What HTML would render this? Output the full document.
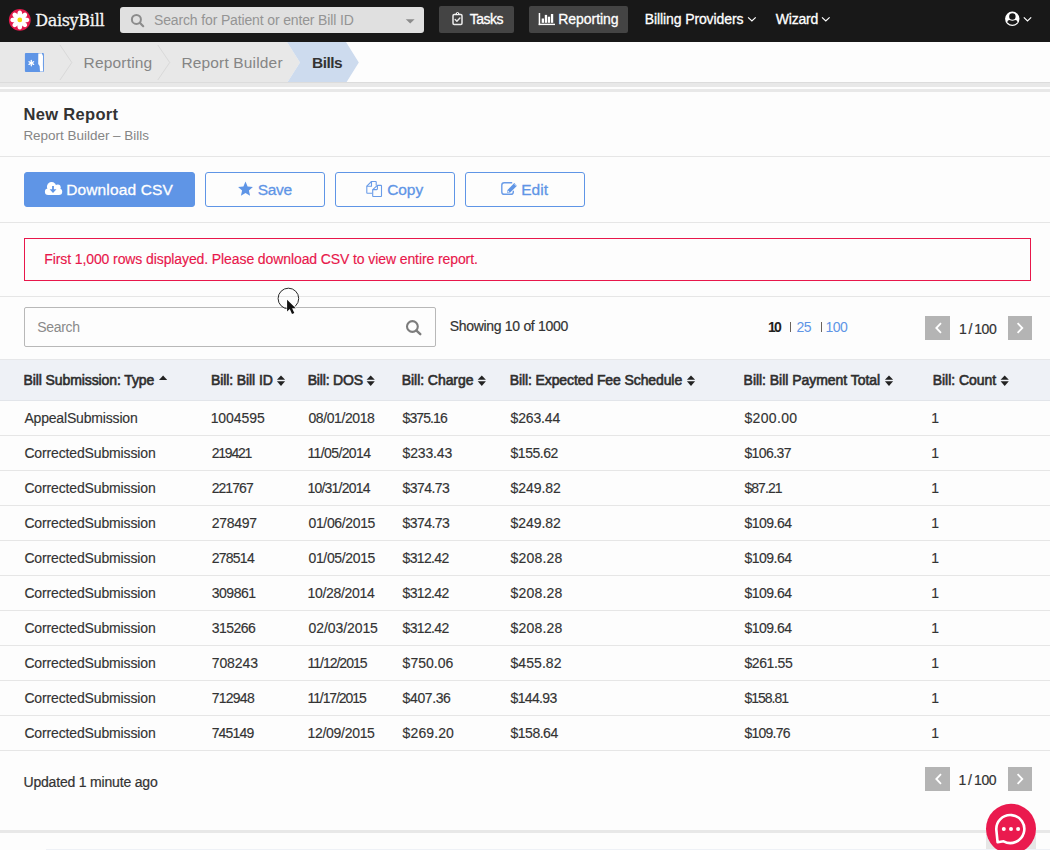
<!DOCTYPE html>
<html lang="en">
<head>
<meta charset="utf-8">
<title>DaisyBill - Report Builder - Bills</title>
<style>
html,body{margin:0;padding:0;}
body{width:1050px;height:850px;overflow:hidden;position:relative;background:#fdfdfd;font-family:"Liberation Sans",sans-serif;}
.a{position:absolute;}
.t{position:absolute;white-space:nowrap;line-height:1;}
svg{position:absolute;overflow:visible;}
.hl{position:absolute;left:0;width:1050px;height:1px;background:#e6e6e6;}
.btn{position:absolute;top:172px;height:33px;border:1px solid #5f95e6;border-radius:3px;}
.pg{position:absolute;width:25px;height:24px;background:#b4b4b4;}
</style>
</head>
<body>
<!-- top nav -->
<div class="a" id="nav" style="left:0;top:0;width:1050px;height:42px;background:#181818;"></div>
<div class="a" id="navsearch" style="left:120px;top:7px;width:304px;height:26px;background:#e0e0e0;border-radius:3px;"></div>
<div class="a" id="btasks" style="left:439px;top:6px;width:75px;height:27px;background:#444;border-radius:2px;"></div>
<div class="a" id="breport" style="left:529px;top:6px;width:99px;height:27px;background:#444;border-radius:2px;"></div>
<!-- breadcrumb -->
<div class="a" id="bc" style="left:0;top:42px;width:1050px;height:41px;background:#fdfdfd;"></div>
<svg id="bcsvg" style="left:0;top:42px;" width="1050" height="41" viewBox="0 0 1050 41">
  <path d="M0 0H287L300 20.5L287 41H0Z" fill="#e8e8e8"/>
  <path d="M287 0H346L358.8 20.5L346 41H287L300 20.5Z" fill="#cddbee"/>
  <path d="M60 3L71.8 20.5L60 38" fill="none" stroke="#d9d9d9" stroke-width="1"/>
  <path d="M157.8 3L169.7 20.5L157.8 38" fill="none" stroke="#d9d9d9" stroke-width="1"/>
</svg>
<div class="a" style="left:0;top:82px;width:1050px;height:1px;background:#dcdcdc;"></div>
<div class="a" style="left:0;top:83px;width:1050px;height:4px;background:#e8e8e8;"></div>
<div class="a" style="left:0;top:87px;width:1050px;height:2px;background:#fdfdfd;"></div>
<div class="a" style="left:0;top:89px;width:1050px;height:3px;background:#e8e8e8;"></div>
<!-- dividers -->
<div class="hl" style="top:156px;"></div>
<div class="hl" style="top:222px;"></div>
<div class="hl" style="top:296px;"></div>
<!-- buttons -->
<div class="btn" style="left:24px;width:169px;background:#5f95e6;"></div>
<div class="btn" style="left:205px;width:118px;"></div>
<div class="btn" style="left:335px;width:118px;"></div>
<div class="btn" style="left:465px;width:118px;"></div>
<!-- alert -->
<div class="a" style="left:24px;top:238px;width:1005px;height:41px;border:1px solid #e8174b;"></div>
<!-- search input -->
<div class="a" style="left:24px;top:307px;width:410px;height:38px;border:1px solid #b8b8b8;border-radius:2px;"></div>
<!-- pager top -->
<div class="pg" style="left:925px;top:316px;"></div>
<div class="pg" style="left:1008px;top:316px;width:24px;"></div>
<!-- table header -->
<div class="a" style="left:0;top:359px;width:1050px;height:42px;background:#eef1f6;box-sizing:border-box;border-top:1px solid #e6e7e9;border-bottom:1px solid #e2e5ea;"></div>
<!-- row lines -->
<div class="hl" style="top:435px;"></div>
<div class="hl" style="top:470px;"></div>
<div class="hl" style="top:505px;"></div>
<div class="hl" style="top:540px;"></div>
<div class="hl" style="top:575px;"></div>
<div class="hl" style="top:610px;"></div>
<div class="hl" style="top:645px;"></div>
<div class="hl" style="top:680px;"></div>
<div class="hl" style="top:715px;"></div>
<div class="hl" style="top:750px;"></div>
<!-- pager bottom -->
<div class="pg" style="left:925px;top:767px;"></div>
<div class="pg" style="left:1008px;top:767px;width:24px;"></div>
<!-- bottom band -->
<div class="a" style="left:0;top:830px;width:1050px;height:3px;background:#e8e8e8;"></div>
<div class="a" style="left:46px;top:849px;width:1004px;height:1px;background:#eef1f6;"></div>
<!-- logo daisy -->
<svg style="left:0;top:0" width="42" height="42" viewBox="0 0 42 42">
  <circle cx="19.8" cy="19.9" r="10.9" fill="#e2194b"/>
  <g fill="#fff" transform="translate(19.8 19.9)">
    <ellipse cx="0" cy="-5.6" rx="2.45" ry="3.9"/>
    <ellipse cx="0" cy="-5.6" rx="2.45" ry="3.9" transform="rotate(45)"/>
    <ellipse cx="0" cy="-5.6" rx="2.45" ry="3.9" transform="rotate(90)"/>
    <ellipse cx="0" cy="-5.6" rx="2.45" ry="3.9" transform="rotate(135)"/>
    <ellipse cx="0" cy="-5.6" rx="2.45" ry="3.9" transform="rotate(180)"/>
    <ellipse cx="0" cy="-5.6" rx="2.45" ry="3.9" transform="rotate(225)"/>
    <ellipse cx="0" cy="-5.6" rx="2.45" ry="3.9" transform="rotate(270)"/>
    <ellipse cx="0" cy="-5.6" rx="2.45" ry="3.9" transform="rotate(315)"/>
    <circle r="4.4" fill="#fff"/>
    <circle r="2.4" fill="#f7d308"/>
  </g>
</svg>
<!-- nav icons -->
<svg style="left:0;top:0" width="1050" height="42" viewBox="0 0 1050 42">
  <!-- search magnifier -->
  <circle cx="136.4" cy="19.4" r="4.5" fill="none" stroke="#8c8c8c" stroke-width="2"/>
  <path d="M139.8 22.8L143.2 26.2" stroke="#8c8c8c" stroke-width="2.2" stroke-linecap="round"/>
  <!-- caret -->
  <path d="M405.8 19.2H414.6L410.2 23.4Z" fill="#8c8c8c"/>
  <!-- tasks clipboard -->
  <g fill="none" stroke="#ececec" stroke-width="1.5" stroke-linejoin="round">
    <rect x="453" y="14.6" width="9" height="9.8" rx="1.2"/>
    <path d="M455.2 19.6L456.9 21.2L459.9 18" stroke-linecap="round" stroke-width="1.4"/>
  </g>
  <path d="M455 14.4L456.4 12.6Q457.5 11.6 458.6 12.6L460 14.4Z" fill="#fff"/>
  <circle cx="457.5" cy="13.4" r="0.6" fill="#444"/>
  <!-- bar chart -->
  <g fill="#fff">
    <rect x="538.7" y="13" width="1.5" height="12.1"/>
    <rect x="538.7" y="23.7" width="16.3" height="1.4"/>
    <rect x="541.7" y="18.5" width="2.3" height="4.3"/>
    <rect x="544.8" y="14.9" width="2.3" height="7.9"/>
    <rect x="547.8" y="16.7" width="2.3" height="6.1"/>
    <rect x="550.9" y="14" width="2.3" height="8.8"/>
  </g>
  <!-- chevrons -->
  <g fill="none" stroke="#fff" stroke-width="1.2">
    <path d="M748.1 17.4L751.9 21L755.7 17.4"/>
    <path d="M822 17.4L825.8 21L829.6 17.4"/>
    <path d="M1023.8 17.4L1027.5 21L1031.2 17.4"/>
  </g>
  <!-- user circle -->
  <circle cx="1012.3" cy="18.8" r="7.2" fill="#fff"/>
  <circle cx="1012.4" cy="16.5" r="3.2" fill="#181818"/>
  <path d="M1007.2 22.3Q1007.6 20.2 1009.6 20.1Q1012.4 21.4 1015.2 20.1Q1017.2 20.2 1017.6 22.3Q1012.4 27.4 1007.2 22.3Z" fill="#181818"/>
</svg>
<!-- breadcrumb home icon -->
<svg style="left:20px;top:48px" width="30" height="28" viewBox="20 48 30 28">
  <rect x="24.9" y="52.9" width="19" height="19.1" rx="1" fill="#5f95e6"/>
  <g stroke="#fff" stroke-width="1.3" stroke-linecap="round">
    <path d="M31.3 60.4V65.8"/><path d="M29 61.8L33.6 64.4"/><path d="M29 64.4L33.6 61.8"/>
  </g>
  <path d="M38.3 53.4L41.8 53.2L43 56L42.9 65L43.1 71.4L40 71.6L39.6 66L38.2 64Z" fill="#fff"/>
</svg>
<!-- button icons -->
<svg style="left:0;top:172px" width="600" height="35" viewBox="0 172 600 35">
  <!-- cloud download -->
  <g fill="#fff">
    <circle cx="51.6" cy="186.8" r="4.7"/>
    <circle cx="57.8" cy="187.3" r="2.9"/>
    <rect x="44.9" y="188.4" width="17.3" height="6.6" rx="3.3"/>
    <rect x="48" y="187" width="11" height="6"/>
  </g>
  <path d="M52.1 186.1H53.9V189.3H56.5L53 193.1L49.6 189.3H52.1Z" fill="#5f95e6"/>
  <!-- star -->
  <path d="M245.5 181.6L247.6 186.5L252.9 187L248.9 190.5L250.1 195.8L245.5 193L240.9 195.8L242.1 190.5L238.1 187L243.4 186.5Z" fill="#5f95e6"/>
  <!-- copy -->
  <g fill="none" stroke="#6a9ce8" stroke-width="1.1" stroke-linejoin="round">
    <path d="M372.2 193.2H367.3Q366.8 193.2 366.8 192.7V186.2L371.5 181.5H375.7Q376.2 181.5 376.2 182V185.5"/>
    <path d="M366.8 186.2H371.5V181.5"/>
    <path d="M372.7 189.6L377.4 185.4H381Q381.5 185.4 381.5 185.9V196Q381.5 196.5 381 196.5H373.2Q372.7 196.5 372.7 196Z"/>
    <path d="M372.7 189.6H376.6Q377.4 189.6 377.4 188.8V185.4"/>
  </g>
  <!-- edit -->
  <path d="M512.2 182.8H504.2Q501.8 182.8 501.8 185.2V191.9Q501.8 194.3 504.2 194.3H510.9Q513.3 194.3 513.3 191.9V190.8" fill="none" stroke="#6a9ce8" stroke-width="1.4"/>
  <path d="M507.1 192.9L507.5 189.9L514.3 183.1L517 185.8L510.2 192.6Z" fill="#5f95e6"/>
  <path d="M514.6 184.1L516.6 186.1" stroke="#fdfdfd" stroke-width="0.8"/>
  <path d="M508 190.6L509.4 192L507.6 192.4Z" fill="#fdfdfd"/>
</svg>
<!-- input search icon -->
<svg style="left:398px;top:312px" width="30" height="30" viewBox="398 312 30 30">
  <circle cx="412.4" cy="326.5" r="5.4" fill="none" stroke="#7c7c7c" stroke-width="2.1"/>
  <path d="M416.5 330.6L420.3 334.2" stroke="#7c7c7c" stroke-width="2.4" stroke-linecap="round"/>
</svg>
<!-- per-page separators -->
<div class="a" style="left:789.5px;top:322.3px;width:1.5px;height:9.8px;background:#6a625c;"></div>
<div class="a" style="left:820.5px;top:322.3px;width:1.5px;height:9.8px;background:#6a625c;"></div>
<!-- sort icons + pager chevrons -->
<svg style="left:0;top:300px" width="1050" height="100" viewBox="0 300 1050 100">
  <path d="M159 379.9L163.1 375.5L167.2 379.9Z" fill="#222"/>
  <g fill="#222">
    <path d="M276.9 379.8L281 375.4L285.1 379.8Z"/><path d="M276.9 381.2L281 385.9L285.1 381.2Z"/>
  </g>
  <g fill="#222" transform="translate(89.7 0)"><path d="M276.9 379.8L281 375.4L285.1 379.8Z"/><path d="M276.9 381.2L281 385.9L285.1 381.2Z"/></g>
  <g fill="#222" transform="translate(200.8 0)"><path d="M276.9 379.8L281 375.4L285.1 379.8Z"/><path d="M276.9 381.2L281 385.9L285.1 381.2Z"/></g>
  <g fill="#222" transform="translate(410 0)"><path d="M276.9 379.8L281 375.4L285.1 379.8Z"/><path d="M276.9 381.2L281 385.9L285.1 381.2Z"/></g>
  <g fill="#222" transform="translate(608 0)"><path d="M276.9 379.8L281 375.4L285.1 379.8Z"/><path d="M276.9 381.2L281 385.9L285.1 381.2Z"/></g>
  <g fill="#222" transform="translate(723.7 0)"><path d="M276.9 379.8L281 375.4L285.1 379.8Z"/><path d="M276.9 381.2L281 385.9L285.1 381.2Z"/></g>
  <g fill="none" stroke="#fff" stroke-width="1.8">
    <path d="M941 323.2L936.3 328L941 332.8"/>
    <path d="M1017.6 323.2L1022.3 328L1017.6 332.8"/>
  </g>
</svg>
<svg style="left:900px;top:760px" width="150" height="40" viewBox="900 760 150 40">
  <g fill="none" stroke="#fff" stroke-width="1.8">
    <path d="M941 774.2L936.3 779L941 783.8"/>
    <path d="M1017.6 774.2L1022.3 779L1017.6 783.8"/>
  </g>
</svg>
<!-- chat launcher -->
<div class="a" style="left:986px;top:834px;width:50px;height:15px;background:#e6e6e6;"></div>
<svg style="left:980px;top:795px" width="70" height="55" viewBox="980 795 70 55">
  <circle cx="1011" cy="828.8" r="25" fill="#ea1a4e"/>
  <path d="M997.6 842.3 L996.4 830.5 A14 14 0 1 1 1003.6 841.3 Z" fill="none" stroke="#fff" stroke-width="2.6" stroke-linejoin="round"/>
  <circle cx="1003.8" cy="828.9" r="2" fill="#fff"/>
  <circle cx="1011" cy="828.9" r="2" fill="#fff"/>
  <circle cx="1018.1" cy="828.9" r="2" fill="#fff"/>
</svg>
<!-- mouse pointer with click ring -->
<svg style="left:268px;top:280px" width="40" height="40" viewBox="268 280 40 40">
  <circle cx="288.4" cy="298.5" r="10.3" fill="none" stroke="#1e1e1e" stroke-width="0.95"/>
  <path d="M287.1 299.8V311.6L289.8 309.1L292 314.1L294.3 313.1L292.1 308.2H295.7Z" fill="#111" stroke="#fff" stroke-width="1.1" stroke-linejoin="round" paint-order="stroke"/>
</svg>

<span class="t" style="left:35.15px;top:13px;font-size:16px;color:#f4f4f4;font-family:'DejaVu Serif','Liberation Serif',serif;-webkit-text-stroke:0.3px;letter-spacing:-0.303px;">DaisyBill</span>
<span class="t" style="left:154.00px;top:13px;font-size:14px;color:#949494;letter-spacing:-0.142px;">Search for Patient or enter Bill ID</span>
<span class="t" style="left:469.75px;top:12px;font-size:14px;color:#fff;-webkit-text-stroke:0.3px;letter-spacing:-0.497px;">Tasks</span>
<span class="t" style="left:558.15px;top:12px;font-size:14px;color:#fff;-webkit-text-stroke:0.3px;letter-spacing:-0.027px;">Reporting</span>
<span class="t" style="left:644.75px;top:12px;font-size:14px;color:#fff;-webkit-text-stroke:0.3px;letter-spacing:-0.105px;">Billing Providers</span>
<span class="t" style="left:775.75px;top:12px;font-size:14px;color:#fff;-webkit-text-stroke:0.3px;letter-spacing:-0.214px;">Wizard</span>
<span class="t" style="left:83.50px;top:55px;font-size:15.5px;color:#858585;letter-spacing:0.189px;">Reporting</span>
<span class="t" style="left:181.40px;top:55px;font-size:15.5px;color:#858585;letter-spacing:0.160px;">Report Builder</span>
<span class="t" style="left:312.10px;top:55px;font-size:15.5px;color:#333;font-weight:700;letter-spacing:-0.553px;">Bills</span>
<span class="t" style="left:23.40px;top:106px;font-size:16.5px;color:#333;font-weight:700;letter-spacing:0.335px;">New Report</span>
<span class="t" style="left:23.40px;top:129px;font-size:13.5px;color:#858585;letter-spacing:-0.024px;">Report Builder – Bills</span>
<span class="t" style="left:66.15px;top:182px;font-size:15.5px;color:#fff;-webkit-text-stroke:0.3px;letter-spacing:0.139px;">Download CSV</span>
<span class="t" style="left:257.75px;top:182px;font-size:15.5px;color:#5f95e6;-webkit-text-stroke:0.3px;letter-spacing:-0.336px;">Save</span>
<span class="t" style="left:387.15px;top:182px;font-size:15.5px;color:#5f95e6;-webkit-text-stroke:0.3px;letter-spacing:-0.045px;">Copy</span>
<span class="t" style="left:521.15px;top:182px;font-size:15.5px;color:#5f95e6;-webkit-text-stroke:0.3px;letter-spacing:0.099px;">Edit</span>
<span class="t" style="left:44.28px;top:252px;font-size:14px;color:#e8174b;-webkit-text-stroke:0.15px;letter-spacing:-0.100px;">First 1,000 rows displayed. Please download CSV to view entire report.</span>
<span class="t" style="left:37.20px;top:320px;font-size:14px;color:#8a8a8a;letter-spacing:-0.294px;">Search</span>
<span class="t" style="left:449.70px;top:319px;font-size:14px;color:#333;-webkit-text-stroke:0.2px;letter-spacing:-0.305px;">Showing 10 of 1000</span>
<span class="t" style="left:768.00px;top:320px;font-size:14px;color:#222;font-weight:700;letter-spacing:-1.786px;">10</span>
<span class="t" style="left:796.60px;top:320px;font-size:14px;color:#5f95e6;letter-spacing:-0.686px;">25</span>
<span class="t" style="left:825.60px;top:320px;font-size:14px;color:#5f95e6;letter-spacing:-0.586px;">100</span>
<span class="t" style="left:958.90px;top:322px;font-size:14px;color:#333;word-spacing:-1.2px;-webkit-text-stroke:0.2px;letter-spacing:-0.438px;">1 / 100</span>
<span class="t" style="left:23.60px;top:373px;font-size:14px;color:#2e2e2e;-webkit-text-stroke:0.6px;letter-spacing:-0.108px;">Bill Submission: Type</span>
<span class="t" style="left:210.90px;top:373px;font-size:14px;color:#2e2e2e;-webkit-text-stroke:0.6px;letter-spacing:-0.091px;">Bill: Bill ID</span>
<span class="t" style="left:307.70px;top:373px;font-size:14px;color:#2e2e2e;-webkit-text-stroke:0.6px;letter-spacing:-0.181px;">Bill: DOS</span>
<span class="t" style="left:401.80px;top:373px;font-size:14px;color:#2e2e2e;-webkit-text-stroke:0.6px;letter-spacing:-0.062px;">Bill: Charge</span>
<span class="t" style="left:509.70px;top:373px;font-size:14px;color:#2e2e2e;-webkit-text-stroke:0.6px;letter-spacing:-0.101px;">Bill: Expected Fee Schedule</span>
<span class="t" style="left:743.60px;top:373px;font-size:14px;color:#2e2e2e;-webkit-text-stroke:0.6px;letter-spacing:-0.039px;">Bill: Bill Payment Total</span>
<span class="t" style="left:932.70px;top:373px;font-size:14px;color:#2e2e2e;-webkit-text-stroke:0.6px;letter-spacing:-0.032px;">Bill: Count</span>
<span class="t" style="left:24.38px;top:411px;font-size:14px;color:#333;-webkit-text-stroke:0.15px;letter-spacing:-0.175px;">AppealSubmission</span>
<span class="t" style="left:210.67px;top:411px;font-size:14px;color:#333;-webkit-text-stroke:0.15px;letter-spacing:-0.078px;">1004595</span>
<span class="t" style="left:308.47px;top:411px;font-size:14px;color:#333;-webkit-text-stroke:0.15px;letter-spacing:-0.404px;">08/01/2018</span>
<span class="t" style="left:402.57px;top:411px;font-size:14px;color:#333;-webkit-text-stroke:0.15px;letter-spacing:-0.912px;">$375.16</span>
<span class="t" style="left:510.47px;top:411px;font-size:14px;color:#333;-webkit-text-stroke:0.15px;letter-spacing:-0.128px;">$263.44</span>
<span class="t" style="left:744.38px;top:411px;font-size:14px;color:#333;-webkit-text-stroke:0.15px;letter-spacing:0.355px;">$200.00</span>
<span class="t" style="left:931.28px;top:411px;font-size:14px;color:#333;-webkit-text-stroke:0.15px;">1</span>
<span class="t" style="left:24.38px;top:446px;font-size:14px;color:#333;-webkit-text-stroke:0.15px;letter-spacing:-0.139px;">CorrectedSubmission</span>
<span class="t" style="left:211.67px;top:446px;font-size:14px;color:#333;-webkit-text-stroke:0.15px;letter-spacing:-1.196px;">219421</span>
<span class="t" style="left:307.47px;top:446px;font-size:14px;color:#333;-webkit-text-stroke:0.15px;letter-spacing:-0.610px;">11/05/2014</span>
<span class="t" style="left:402.57px;top:446px;font-size:14px;color:#333;-webkit-text-stroke:0.15px;letter-spacing:-0.162px;">$233.43</span>
<span class="t" style="left:510.47px;top:446px;font-size:14px;color:#333;-webkit-text-stroke:0.15px;letter-spacing:-0.445px;">$155.62</span>
<span class="t" style="left:744.38px;top:446px;font-size:14px;color:#333;-webkit-text-stroke:0.15px;letter-spacing:-0.595px;">$106.37</span>
<span class="t" style="left:931.28px;top:446px;font-size:14px;color:#333;-webkit-text-stroke:0.15px;">1</span>
<span class="t" style="left:24.38px;top:481px;font-size:14px;color:#333;-webkit-text-stroke:0.15px;letter-spacing:-0.139px;">CorrectedSubmission</span>
<span class="t" style="left:211.67px;top:481px;font-size:14px;color:#333;-webkit-text-stroke:0.15px;letter-spacing:-0.936px;">221767</span>
<span class="t" style="left:307.47px;top:481px;font-size:14px;color:#333;-webkit-text-stroke:0.15px;letter-spacing:-0.781px;">10/31/2014</span>
<span class="t" style="left:402.57px;top:481px;font-size:14px;color:#333;-webkit-text-stroke:0.15px;letter-spacing:-0.578px;">$374.73</span>
<span class="t" style="left:510.47px;top:481px;font-size:14px;color:#333;-webkit-text-stroke:0.15px;letter-spacing:-0.028px;">$249.82</span>
<span class="t" style="left:744.38px;top:481px;font-size:14px;color:#333;-webkit-text-stroke:0.15px;letter-spacing:-0.917px;">$87.21</span>
<span class="t" style="left:931.28px;top:481px;font-size:14px;color:#333;-webkit-text-stroke:0.15px;">1</span>
<span class="t" style="left:24.38px;top:516px;font-size:14px;color:#333;-webkit-text-stroke:0.15px;letter-spacing:-0.139px;">CorrectedSubmission</span>
<span class="t" style="left:211.67px;top:516px;font-size:14px;color:#333;-webkit-text-stroke:0.15px;letter-spacing:-0.256px;">278497</span>
<span class="t" style="left:308.47px;top:516px;font-size:14px;color:#333;-webkit-text-stroke:0.15px;letter-spacing:-0.348px;">01/06/2015</span>
<span class="t" style="left:402.57px;top:516px;font-size:14px;color:#333;-webkit-text-stroke:0.15px;letter-spacing:-0.578px;">$374.73</span>
<span class="t" style="left:510.47px;top:516px;font-size:14px;color:#333;-webkit-text-stroke:0.15px;letter-spacing:-0.028px;">$249.82</span>
<span class="t" style="left:744.38px;top:516px;font-size:14px;color:#333;-webkit-text-stroke:0.15px;letter-spacing:-0.478px;">$109.64</span>
<span class="t" style="left:931.28px;top:516px;font-size:14px;color:#333;-webkit-text-stroke:0.15px;">1</span>
<span class="t" style="left:24.38px;top:551px;font-size:14px;color:#333;-webkit-text-stroke:0.15px;letter-spacing:-0.139px;">CorrectedSubmission</span>
<span class="t" style="left:211.67px;top:551px;font-size:14px;color:#333;-webkit-text-stroke:0.15px;letter-spacing:-0.736px;">278514</span>
<span class="t" style="left:308.47px;top:551px;font-size:14px;color:#333;-webkit-text-stroke:0.15px;letter-spacing:-0.348px;">01/05/2015</span>
<span class="t" style="left:402.57px;top:551px;font-size:14px;color:#333;-webkit-text-stroke:0.15px;letter-spacing:-0.662px;">$312.42</span>
<span class="t" style="left:510.47px;top:551px;font-size:14px;color:#333;-webkit-text-stroke:0.15px;letter-spacing:0.205px;">$208.28</span>
<span class="t" style="left:744.38px;top:551px;font-size:14px;color:#333;-webkit-text-stroke:0.15px;letter-spacing:-0.478px;">$109.64</span>
<span class="t" style="left:931.28px;top:551px;font-size:14px;color:#333;-webkit-text-stroke:0.15px;">1</span>
<span class="t" style="left:24.38px;top:586px;font-size:14px;color:#333;-webkit-text-stroke:0.15px;letter-spacing:-0.139px;">CorrectedSubmission</span>
<span class="t" style="left:211.67px;top:586px;font-size:14px;color:#333;-webkit-text-stroke:0.15px;letter-spacing:-0.456px;">309861</span>
<span class="t" style="left:307.47px;top:586px;font-size:14px;color:#333;-webkit-text-stroke:0.15px;letter-spacing:-0.315px;">10/28/2014</span>
<span class="t" style="left:402.57px;top:586px;font-size:14px;color:#333;-webkit-text-stroke:0.15px;letter-spacing:-0.662px;">$312.42</span>
<span class="t" style="left:510.47px;top:586px;font-size:14px;color:#333;-webkit-text-stroke:0.15px;letter-spacing:0.205px;">$208.28</span>
<span class="t" style="left:744.38px;top:586px;font-size:14px;color:#333;-webkit-text-stroke:0.15px;letter-spacing:-0.478px;">$109.64</span>
<span class="t" style="left:931.28px;top:586px;font-size:14px;color:#333;-webkit-text-stroke:0.15px;">1</span>
<span class="t" style="left:24.38px;top:621px;font-size:14px;color:#333;-webkit-text-stroke:0.15px;letter-spacing:-0.139px;">CorrectedSubmission</span>
<span class="t" style="left:211.67px;top:621px;font-size:14px;color:#333;-webkit-text-stroke:0.15px;letter-spacing:-0.536px;">315266</span>
<span class="t" style="left:308.47px;top:621px;font-size:14px;color:#333;-webkit-text-stroke:0.15px;letter-spacing:-0.070px;">02/03/2015</span>
<span class="t" style="left:402.57px;top:621px;font-size:14px;color:#333;-webkit-text-stroke:0.15px;letter-spacing:-0.662px;">$312.42</span>
<span class="t" style="left:510.47px;top:621px;font-size:14px;color:#333;-webkit-text-stroke:0.15px;letter-spacing:0.205px;">$208.28</span>
<span class="t" style="left:744.38px;top:621px;font-size:14px;color:#333;-webkit-text-stroke:0.15px;letter-spacing:-0.478px;">$109.64</span>
<span class="t" style="left:931.28px;top:621px;font-size:14px;color:#333;-webkit-text-stroke:0.15px;">1</span>
<span class="t" style="left:24.38px;top:656px;font-size:14px;color:#333;-webkit-text-stroke:0.15px;letter-spacing:-0.139px;">CorrectedSubmission</span>
<span class="t" style="left:211.67px;top:656px;font-size:14px;color:#333;-webkit-text-stroke:0.15px;letter-spacing:-0.056px;">708243</span>
<span class="t" style="left:307.47px;top:656px;font-size:14px;color:#333;-webkit-text-stroke:0.15px;letter-spacing:-0.999px;">11/12/2015</span>
<span class="t" style="left:402.57px;top:656px;font-size:14px;color:#333;-webkit-text-stroke:0.15px;letter-spacing:0.038px;">$750.06</span>
<span class="t" style="left:510.47px;top:656px;font-size:14px;color:#333;-webkit-text-stroke:0.15px;letter-spacing:0.072px;">$455.82</span>
<span class="t" style="left:744.38px;top:656px;font-size:14px;color:#333;-webkit-text-stroke:0.15px;letter-spacing:-0.378px;">$261.55</span>
<span class="t" style="left:931.28px;top:656px;font-size:14px;color:#333;-webkit-text-stroke:0.15px;">1</span>
<span class="t" style="left:24.38px;top:691px;font-size:14px;color:#333;-webkit-text-stroke:0.15px;letter-spacing:-0.139px;">CorrectedSubmission</span>
<span class="t" style="left:211.67px;top:691px;font-size:14px;color:#333;-webkit-text-stroke:0.15px;letter-spacing:-0.736px;">712948</span>
<span class="t" style="left:307.47px;top:691px;font-size:14px;color:#333;-webkit-text-stroke:0.15px;letter-spacing:-1.088px;">11/17/2015</span>
<span class="t" style="left:402.57px;top:691px;font-size:14px;color:#333;-webkit-text-stroke:0.15px;letter-spacing:-0.378px;">$407.36</span>
<span class="t" style="left:510.47px;top:691px;font-size:14px;color:#333;-webkit-text-stroke:0.15px;letter-spacing:-0.628px;">$144.93</span>
<span class="t" style="left:744.38px;top:691px;font-size:14px;color:#333;-webkit-text-stroke:0.15px;letter-spacing:-0.978px;">$158.81</span>
<span class="t" style="left:931.28px;top:691px;font-size:14px;color:#333;-webkit-text-stroke:0.15px;">1</span>
<span class="t" style="left:24.38px;top:726px;font-size:14px;color:#333;-webkit-text-stroke:0.15px;letter-spacing:-0.139px;">CorrectedSubmission</span>
<span class="t" style="left:211.67px;top:726px;font-size:14px;color:#333;-webkit-text-stroke:0.15px;letter-spacing:-0.836px;">745149</span>
<span class="t" style="left:307.47px;top:726px;font-size:14px;color:#333;-webkit-text-stroke:0.15px;letter-spacing:-0.292px;">12/09/2015</span>
<span class="t" style="left:402.57px;top:726px;font-size:14px;color:#333;-webkit-text-stroke:0.15px;letter-spacing:0.122px;">$269.20</span>
<span class="t" style="left:510.47px;top:726px;font-size:14px;color:#333;-webkit-text-stroke:0.15px;letter-spacing:-0.478px;">$158.64</span>
<span class="t" style="left:744.38px;top:726px;font-size:14px;color:#333;-webkit-text-stroke:0.15px;letter-spacing:-0.728px;">$109.76</span>
<span class="t" style="left:931.28px;top:726px;font-size:14px;color:#333;-webkit-text-stroke:0.15px;">1</span>
<span class="t" style="left:23.50px;top:775px;font-size:14px;color:#333;-webkit-text-stroke:0.2px;letter-spacing:-0.188px;">Updated 1 minute ago</span>
<span class="t" style="left:958.40px;top:773px;font-size:14px;color:#333;word-spacing:-1.2px;-webkit-text-stroke:0.2px;letter-spacing:-0.371px;">1 / 100</span>
</body>
</html>
